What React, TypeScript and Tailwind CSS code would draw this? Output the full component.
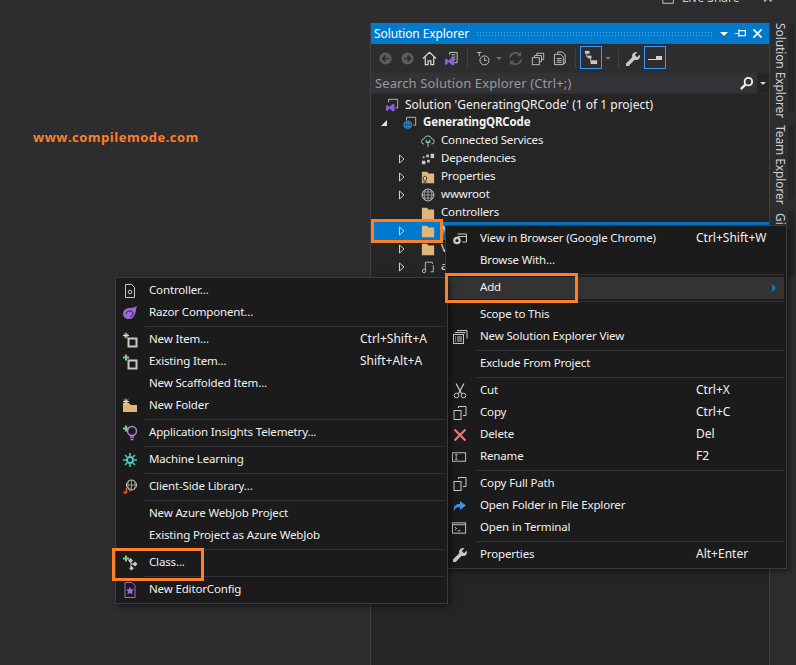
import React from "react";

const S = ({ children, cls = "w-4 h-4" }: { children: React.ReactNode; cls?: string }) => (
  <svg viewBox="0 0 16 16" fill="none" className={cls + " shrink-0"}>{children}</svg>
);
const G = "#c8c8c8";
const Folder = ({ c = "#dcb67a" }: { c?: string }) => (
  <S cls="w-[14px] h-[14px]"><path d="M1 2h6l1.500 2H15v11H1z" fill={c} /></S>
);
const FileDoc = () => (<S><path d="M3.500 1.500h6l3 3v10h-9z" stroke={G} /><circle cx="8" cy="9" r="1.800" stroke={G} /></S>);
const Razor = () => (<S><path d="M1 9c0-4 3-6 7-6 3 0 5-1 7-2-1 3-1 5-2 8-1 3-3 5-6 5-3 0-6-2-6-5z" fill="#9b6bd3" /><path d="M4 9c0-2 2-3 4-3s3 1 3 3-2 3-3 2" stroke="#2a1a40" /></S>);
const Star = ({ c = "#f0e0b0" }: { c?: string }) => (<path d="M4 0.500v6M1 3.500h6M2 1.500l4 4M6 1.500l-4 4" stroke={c} />);
const Plus = ({ c = "#7ecb7e" }: { c?: string }) => (<path d="M1 3.500h6M4 0.500v6" stroke={c} strokeWidth="2" />);
const NewItem = () => (<S><rect x="6.500" y="6.500" width="8" height="8" stroke={G} strokeWidth="2" /><Star /></S>);
const ExistItem = () => (<S><rect x="6.500" y="6.500" width="8" height="8" stroke={G} strokeWidth="2" /><Plus /></S>);
const NewFolder = () => (<S><path d="M1 5h6l2 2h6v7H1z" fill="#dcb67a" /><Star /></S>);
const Insights = () => (<S><Plus /><circle cx="10" cy="6" r="4.500" stroke="#b180d7" strokeWidth="1.500" /><path d="M8 12h4M8.500 14.500h3" stroke="#b180d7" strokeWidth="1.500" /></S>);
const Gear = () => (<S><circle cx="8" cy="8" r="3" stroke="#4ec9c0" strokeWidth="2" /><path d="M8 1v3M8 12v3M1 8h3M12 8h3M3 3l2 2M11 11l2 2M13 3l-2 2M5 11l-2 2" stroke="#4ec9c0" strokeWidth="1.600" /></S>);
const Client = () => (<S><circle cx="9.500" cy="6" r="5" stroke={G} /><path d="M4.500 6h10M9.500 1v10M7 1.500c-1.500 3-1.500 6 0 9M12 1.500c1.500 3 1.500 6 0 9" stroke={G} strokeWidth=".7" /><path d="M4.500 9v5M8 8.500v4" stroke="#e8632c" strokeWidth="1.400" /><path d="M1.500 12.500h3v2h-3z" fill="#e8632c" /></S>);
const ClassI = () => (<S><Plus /><path d="M8.500 3l2.500 2.500L8.500 8 6 5.500zM13 6.500l2.500 2.500-2.500 2.500-2.500-2.500zM9.500 11l2.300 2.300-2.300 2.300-2.300-2.300z" fill={G} /><path d="M9 7v6M9 9h3" stroke={G} /></S>);
const Editor = () => (<S><path d="M3 .5h7l3 3v12H3z" stroke="#9b6bd3" /><path d="M8 4.500l1.200 2.700 2.800.3-2 2 .6 3L8 11l-2.600 1.500.6-3-2-2 2.800-.3z" fill="#9b6bd3" /></S>);
const Browser = () => (<S><path d="M5.500 3h9v8h-4" stroke={G} /><path d="M5.500 5.500h9" stroke={G} /><circle cx="5" cy="9.500" r="3.800" fill={G} /><circle cx="5" cy="9.500" r="1.500" fill="#1b1b1c" /></S>);
const NewView = () => (<S><path d="M5 1.500h10v8" stroke={G} /><path d="M3 3.500h10v1" stroke={G} /><rect x="1.500" y="5.500" width="10" height="9" stroke={G} /><path d="M3 8h1M5 8h5M3 10h1M5 10h5M3 12h1M5 12h5" stroke={G} /></S>);
const Cut = () => (<S><path d="M4 .5l5.500 10M12 .5L6.500 10.500" stroke={G} strokeWidth="1.300" /><circle cx="4.500" cy="12.500" r="2.300" stroke={G} /><circle cx="11.500" cy="12.500" r="2.300" stroke={G} /></S>);
const Copy = () => (<S><rect x="2" y="5.500" width="7" height="9" stroke={G} /><path d="M6.500 3V1.500H14v9h-3" stroke={G} /></S>);
const Del = () => (<S cls="w-4 h-4"><path d="M2.500 2.500l11 11M13.500 2.500l-11 11" stroke="#f1707b" strokeWidth="2.300" /></S>);
const Rename = () => (<S cls="w-[15px] h-4"><rect x=".5" y="3.500" width="14" height="9" stroke={G} /><path d="M3 5.500h3M3 10.500h3M4.500 5.500v5" stroke={G} strokeWidth=".8" /></S>);
const Open = () => (<S><path d="M2 13c-1-4 1-7 6-7V3l6 4.500L8 12V9c-3 0-5 1-6 4z" fill="#3794e8" /></S>);
const Term = () => (<S cls="w-[15px] h-4"><rect x=".5" y="2.500" width="14" height="11" stroke={G} /><path d="M.5 4.500h14" stroke={G} /><path d="M3 7l2 1.500L3 10M6 11h3" stroke={G} /></S>);
const Wrench = ({ c = G }: { c?: string }) => (<S><path d="M11 1a4 4 0 0 0-3.800 5.300L1 12.500V15h2.700l6-6.200A4 4 0 0 0 15 4.500l-.3-.8L12 6.200 9.800 4l2.500-2.700z" fill={c} /></S>);

type Item = { t?: string; k?: string; i?: React.ReactNode; add?: boolean } | "sep";

const m1: Item[] = [
  { t: "Controller...", i: <FileDoc /> },
  { t: "Razor Component...", i: <Razor /> },
  "sep",
  { t: "New Item...", k: "Ctrl+Shift+A", i: <NewItem /> },
  { t: "Existing Item...", k: "Shift+Alt+A", i: <ExistItem /> },
  { t: "New Scaffolded Item..." },
  { t: "New Folder", i: <NewFolder /> },
  "sep",
  { t: "Application Insights Telemetry...", i: <Insights /> },
  "sep",
  { t: "Machine Learning", i: <Gear /> },
  "sep",
  { t: "Client-Side Library...", i: <Client /> },
  "sep",
  { t: "New Azure WebJob Project" },
  { t: "Existing Project as Azure WebJob" },
  "sep",
  { t: "Class...", i: <ClassI /> },
  "sep",
  { t: "New EditorConfig", i: <Editor /> },
];
const m2: Item[] = [
  { t: "View in Browser (Google Chrome)", k: "Ctrl+Shift+W", i: <Browser /> },
  { t: "Browse With..." },
  "sep",
  { t: "Add", add: true },
  "sep",
  { t: "Scope to This" },
  { t: "New Solution Explorer View", i: <NewView /> },
  "sep",
  { t: "Exclude From Project" },
  "sep",
  { t: "Cut", k: "Ctrl+X", i: <Cut /> },
  { t: "Copy", k: "Ctrl+C", i: <Copy /> },
  { t: "Delete", k: "Del", i: <Del /> },
  { t: "Rename", k: "F2", i: <Rename /> },
  "sep",
  { t: "Copy Full Path", i: <Copy /> },
  { t: "Open Folder in File Explorer", i: <Open /> },
  { t: "Open in Terminal", i: <Term /> },
  "sep",
  { t: "Properties", k: "Alt+Enter", i: <Wrench /> },
];

function Menu({ items, cls, col, sepCls, keyCls }: { items: Item[]; cls: string; col: string; sepCls: string; keyCls: string }) {
  return (
    <div className={"absolute bg-[#1b1b1c] border border-[#3c3c3e] p-[2px] shadow-[2px_2px_6px_rgba(0,0,0,0.5)] " + cls}>
      {items.map((it, n) =>
        it === "sep" ? (
          <div key={n} className={"h-[5px] flex items-center " + sepCls}>
            <div className="h-px w-full bg-[#333337]" />
          </div>
        ) : (
          <div key={n} className={"h-[22px] flex items-center relative " + (it.add ? "bg-[#333334]" : "")}>
            <div className={"flex justify-start items-center pl-[4px] " + col}>{it.i}</div>
            <span className="pb-[2px]">{it.t}</span>
            {it.k && <span className={"ml-auto pb-[2px] text-[12px] tracking-[0px] " + keyCls}>{it.k}</span>}
            {it.add && <div className="ml-auto mr-[8px] w-0 h-0 border-y-[4px] border-y-transparent border-l-[4px] border-l-[#007acc]" />}
          </div>
        )
      )}
    </div>
  );
}

const Caret = () => (
  <svg viewBox="0 0 8 10" className="w-2 h-[10px] shrink-0"><path d="M1.500 1v8L6 5z" stroke="#d0d0d0" fill="none" /></svg>
);
const CaretOpen = () => (
  <svg viewBox="0 0 8 8" className="w-2 h-2 shrink-0"><path d="M7 1v6H1z" fill="#e0e0e0" /></svg>
);

function Row({ caret, icon, text, sel }: { caret?: boolean; icon: React.ReactNode; text: string; sel?: boolean }) {
  return (
    <div className={"h-[18px] flex items-center pl-[27px] " + (sel ? "bg-[#007acc]" : "")}>
      <div className="w-[23px] flex">{caret && <Caret />}</div>
      <div className="w-[20px] flex">{icon}</div>
      <span className="pb-[2px]">{text}</span>
    </div>
  );
}

const WebProj = () => (<S cls="w-[14px] h-[14px]"><path d="M4 5V1.500h10.500v9H12" stroke={G} /><circle cx="5.500" cy="10" r="5" fill="#3794e8" /><path d="M1 10h9M5.500 5v10M3.500 5.500c-1 3-1 6 0 9M7.500 5.500c1 3 1 6 0 9" stroke="#252526" strokeWidth=".7" /></S>);
const VS = () => (<path d="M1 9l1.500-1L5 10l4-3.500 2 1v7l-2 1-4-3.500L2.500 15 1 14z" fill="#8c5fd0" />);
const SolnI = () => (<S cls="w-[14px] h-[14px]"><path d="M4 5V1.500h10.500v10H12" stroke={G} /><VS /></S>);
const Cloud = () => (<S cls="w-[14px] h-[14px]"><path d="M3.500 11.500a3 3 0 0 1 0-6 4.500 4.500 0 0 1 8.700 0 3 3 0 0 1-.2 6" stroke={G} /><path d="M8 8v7M6 6.500v3h4v-3" stroke="#7ecb7e" strokeWidth="1.300" /></S>);
const Deps = () => (<S cls="w-[14px] h-[14px]"><rect x="1" y="10" width="4" height="4" fill={G} /><rect x="7" y="9" width="3" height="3" fill={G} /><rect x="6" y="3" width="3" height="3" fill={G} /><rect x="11" y="2" width="4" height="5" fill={G} /><rect x="2" y="5" width="2" height="2" fill={G} /></S>);
const Props = () => (<S cls="w-[14px] h-[14px]"><path d="M1 2h6l1.500 2H15v11H1z" fill="#dcb67a" /><path d="M4.500 7a2.500 2.500 0 0 0-1 4.500V15h2v-3.500a2.500 2.500 0 0 0-1-4.500z" fill="#c8c8c8" stroke="#252526" /></S>);
const Globe = () => (<S cls="w-[14px] h-[14px]"><circle cx="8" cy="8" r="6.800" stroke={G} /><path d="M1 8h14M2 4.500h12M2 11.500h12M8 1v14M5 2c-2 4-2 8 0 12M11 2c2 4 2 8 0 12" stroke={G} strokeWidth=".8" /></S>);
const Note = () => (<S cls="w-[14px] h-[14px]"><path d="M5 11V2.500h8v2" stroke={G} /><circle cx="3.500" cy="12.500" r="2" stroke={G} /><path d="M11 13.500h3V6" stroke={G} /></S>);

const Circ = ({ arrow }: { arrow: "l" | "r" }) => (
  <S cls="w-[13px] h-[13px]">
    <circle cx="8" cy="8" r="7.500" fill="#5c5c5c" />
    <path d={arrow === "l" ? "M12 8H5M8 4.500L4.500 8 8 11.500" : "M4 8h7M8 4.500L11.500 8 8 11.500"} stroke="#2d2d30" strokeWidth="2" />
  </S>
);
const Drop = () => <div className="w-0 h-0 border-x-[3px] border-x-transparent border-t-[3px] border-t-[#6f6f6f]" />;
const Sep = () => <div className="w-px h-[20px] bg-[#3f3f46]" />;
const Slot = ({ w, children }: { w: string; children: React.ReactNode }) => (
  <div className={"flex items-center justify-center pt-[2px] " + w}>{children}</div>
);

export default function App() {
  return (
    <div className="relative w-[796px] h-[665px] overflow-hidden bg-[#2d2d30] text-[11.5px] tracking-[-0.15px] leading-[16px] text-[#f1f1f1] font-['Noto_Sans',sans-serif] flex pl-[370px] pt-[23px]">
      {/* Live share stub */}
      <div className="absolute top-[-9px] left-[662px] h-[14px] flex items-center text-[#d0d0d0] text-[12px] tracking-[0px]">
        <S cls="w-[14px] h-[14px] mr-[6px]"><rect x="1" y="1" width="12" height="13" stroke="#d0d0d0" /></S>
        <span>Live Share</span>
        <span className="ml-[22px] text-[14px]">✕</span>
      </div>

      {/* Watermark */}
      <div className="absolute left-[33px] top-[128px] text-[13px] leading-[18px] font-bold text-[#ff7f27] font-['Open_Sans',sans-serif] tracking-[0.5px]">
        www.compilemode.com
      </div>

      {/* Solution Explorer panel */}
      <div className="w-[400px] h-[642px] border-x border-[#3f3f46] bg-[#252526] flex flex-col">
        <div className="h-[21px] bg-[#007acc] flex items-center pl-[3px] pr-[5px] text-white">
          <span className="text-[12px] tracking-[-0.1px]">Solution Explorer</span>
          <div className="ml-[7px] flex-1 h-[5px] bg-[radial-gradient(#59a9de_0.7px,transparent_0.8px)] bg-[length:3px_3px]" />
          <div className="ml-[8px] w-0 h-0 border-x-[4px] border-x-transparent border-t-[4px] border-t-white" />
          <S cls="w-[13px] h-[13px] ml-[6px]"><path d="M1 8h5M6 4.500h8v6H6zM6 3v9M14 8" stroke="white" strokeWidth="1.500" /></S>
          <S cls="w-[13px] h-[13px] ml-[4px]"><path d="M3 3l10 10M13 3L3 13" stroke="white" strokeWidth="2" /></S>
        </div>

        <div className="h-[29px] flex items-center pl-[3px] pb-[2px] bg-[#2d2d30]">
          <Slot w="w-[22px]"><Circ arrow="l" /></Slot>
          <Slot w="w-[22px]"><Circ arrow="r" /></Slot>
          <Slot w="w-[22px]">
            <S cls="w-[15px] h-[15px]"><path d="M1 8l7-6.500L15 8M3.500 6.500V14.500h3v-4h3v4h3v-8" stroke="#d8d8d8" strokeWidth="1.300" /></S>
          </Slot>
          <Slot w="w-[22px]">
            <S cls="w-[15px] h-[15px]"><path d="M6 4V1.500h8v11H11" stroke={G} /><path d="M8 4h4M8 6.500h4M8 9h4" stroke={G} /><VS /></S>
          </Slot>
          <Slot w="w-[10px]"><Sep /></Slot>
          <Slot w="w-[22px]">
            <S cls="w-[15px] h-[15px]"><circle cx="9" cy="10" r="4.800" stroke={G} /><path d="M9 7v3h2.500M1 1.500h5M3.500 1.500v4" stroke={G} /></S>
          </Slot>
          <Slot w="w-[10px]"><Drop /></Slot>
          <Slot w="w-[23px]">
            <S cls="w-[15px] h-[15px]"><path d="M2 7a6 6 0 0 1 10-3.500M14 9a6 6 0 0 1-10 3.500" stroke="#5c5c5c" strokeWidth="2" /><path d="M9 5.500h5v-5M7 10.500H2v5" fill="#5c5c5c" /></S>
          </Slot>
          <Slot w="w-[22px]">
            <S cls="w-[14px] h-[14px]"><rect x="1.500" y="6.500" width="8" height="8" stroke={G} /><path d="M4 6.500V4h8v7h-2.500M6.500 4V1.500h8v7H12" stroke={G} /></S>
          </Slot>
          <Slot w="w-[22px]">
            <S cls="w-[15px] h-[15px]"><path d="M5 3V1h5l3 3v9h-2" stroke={G} /><path d="M1.500 3.500H8l3 3v8H1.500z" stroke={G} /><path d="M4 8h5M4 10h5M4 12h5" stroke={G} /></S>
          </Slot>
          <Slot w="w-[8px]"><Sep /></Slot>
          <div className="ml-[1px] w-[22px] h-[23px] border border-[#3399ff] flex items-center justify-center">
            <S cls="w-[15px] h-[15px]"><rect x="1" y="1" width="5" height="3" fill={G} /><rect x="7" y="11" width="7" height="4" fill={G} /><rect x="4" y="6" width="4" height="3" fill={G} /><path d="M3 4v3h2M7 9v3" stroke={G} /></S>
          </div>
          <Slot w="w-[11px]"><Drop /></Slot>
          <Slot w="w-[10px]"><Sep /></Slot>
          <Slot w="w-[20px]"><Wrench /></Slot>
          <div className="ml-[1px] w-[22px] h-[23px] border border-[#3399ff] flex items-center justify-center">
            <div className="flex items-end"><div className="w-[8px] h-px bg-[#d0d0d0]" /><div className="w-[6px] h-[4px] bg-[#d0d0d0]" /></div>
          </div>
        </div>

        <div className="h-[20px] flex items-center">
          <div className="h-[20px] w-[386px] bg-[#333337] flex items-center pl-[4px] text-[#999999] text-[13px] tracking-[0.1px]">
            Search Solution Explorer (Ctrl+;)
            <div className="ml-auto mr-[3px]">
              <S cls="w-[15px] h-[15px]"><circle cx="10" cy="6" r="4" stroke="#f0f0f0" strokeWidth="2" /><path d="M7 9l-5 5" stroke="#f0f0f0" strokeWidth="2.500" /></S>
            </div>
          </div>
          <div className="ml-[3px] w-0 h-0 border-x-[3px] border-x-transparent border-t-[3px] border-t-[#d0d0d0]" />
        </div>

        <div className="h-[1px] bg-[#2d2d30]" />
        <div className="pt-[2px]">
          <div className="h-[18px] flex items-center pl-[14px]">
            <div className="w-[20px] flex"><SolnI /></div>
            <span className="text-[12px] tracking-[0px]">Solution 'GeneratingQRCode' (1 of 1 project)</span>
          </div>
          <div className="h-[18px] flex items-center pl-[9px]">
            <div className="w-[23px] flex"><CaretOpen /></div>
            <div className="w-[20px] flex"><WebProj /></div>
            <span className="font-bold pb-[2px]">GeneratingQRCode</span>
          </div>
          <Row icon={<Cloud />} text="Connected Services" />
          <Row caret icon={<Deps />} text="Dependencies" />
          <Row caret icon={<Props />} text="Properties" />
          <Row caret icon={<Globe />} text="wwwroot" />
          <Row icon={<Folder />} text="Controllers" />
          <Row caret sel icon={<Folder />} text="Models" />
          <Row caret icon={<Folder />} text="Views" />
          <Row caret icon={<Note />} text="appsettings.json" />
        </div>
      </div>

      {/* Side tabs */}
      <div className="w-[26px] flex flex-col text-[#d0d0d0] text-[12px] tracking-[-0.1px]">
        <div className="h-[90px] flex justify-between">
          <div className="[writing-mode:vertical-rl] whitespace-nowrap pl-[2px]">Solution Explorer</div>
          <div className="w-[7px] mr-[1px] bg-[#262627]" />
        </div>
        <div className="mt-[12px] h-[74px] flex justify-between">
          <div className="[writing-mode:vertical-rl] whitespace-nowrap pl-[2px]">Team Explorer</div>
          <div className="w-[7px] mr-[1px] bg-[#262627]" />
        </div>
        <div className="mt-[12px] h-[65px] flex justify-between">
          <div className="[writing-mode:vertical-rl] whitespace-nowrap pl-[2px] pt-[2px]">Git Changes</div>
          <div className="w-[7px] mr-[1px] bg-[#262627]" />
        </div>
      </div>

      <Menu items={m2} cls="left-[445px] top-[225px] w-[342px]" col="w-[32px]" sepCls="pl-[28px]" keyCls="w-[88px]" />
      <Menu items={m1} cls="left-[115px] top-[277px] w-[333px]" col="w-[31px]" sepCls="pl-[27px]" keyCls="w-[85px]" />

      {/* Orange callouts */}
      <div className="absolute left-[371px] top-[219px] w-[72px] h-[24px] border-[3px] border-[#ff7f27]" />
      <div className="absolute left-[445px] top-[273px] w-[133px] h-[30px] border-[3px] border-[#ff7f27]" />
      <div className="absolute left-[112px] top-[548px] w-[92px] h-[33px] border-[3px] border-[#ff7f27]" />
    </div>
  );
}
